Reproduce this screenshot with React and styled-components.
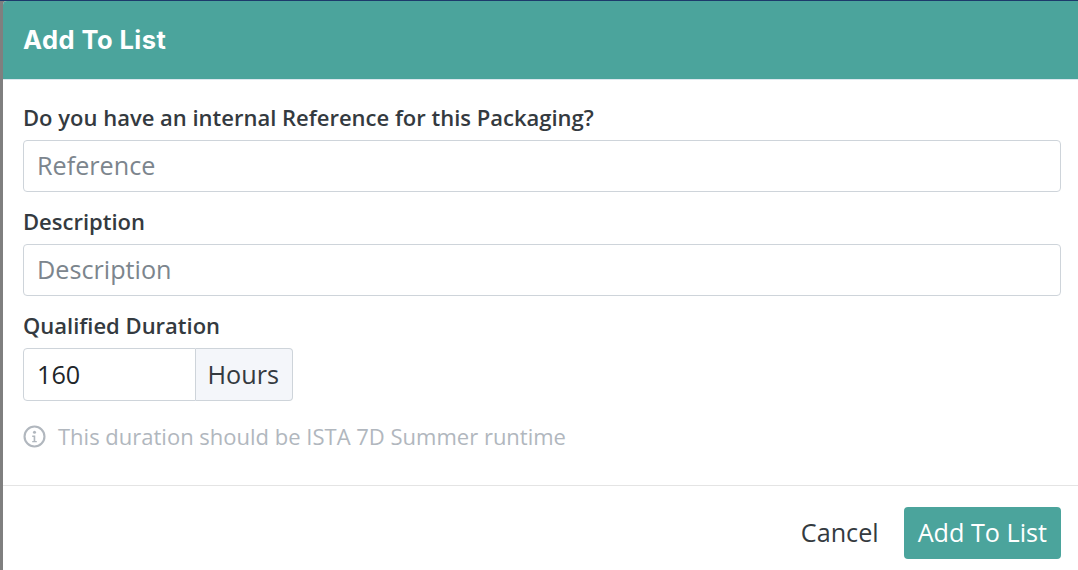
import React from 'react';
import styled, { createGlobalStyle } from 'styled-components';

const GlobalStyle = createGlobalStyle`
  html, body {
    margin: 0;
    padding: 0;
    height: 570px;
    overflow: hidden;
    background: #808080;
    font-family: "Open Sans", "Liberation Sans", sans-serif;
  }
`;

const Backdrop = styled.div`
  height: 570px;
  padding-left: 3px;
  box-sizing: border-box;
  background: #7f7f7f;
  border-top: 1px solid #1d3a6b;
  overflow: hidden;
`;

const Modal = styled.form`
  background: #fff;
  height: 569px;
  border-radius: 4px 0 0 0;
  overflow: hidden;
  display: flex;
  flex-direction: column;
`;

const Header = styled.div`
  height: 79px;
  box-sizing: border-box;
  background: #4ba49c;
  border-bottom: 1px solid #dce7ee;
  display: flex;
  align-items: center;
  padding: 0 20px 2px;
  flex: none;
`;

const Title = styled.h2`
  margin: 0;
  font-family: Inter, "Open Sans", sans-serif;
  font-size: 25.5px;
  letter-spacing: 0.45px;
  font-weight: 700;
  color: #fff;
`;

const Body = styled.div`
  padding: 23px 17px 0 20px;
  height: 406px;
  box-sizing: border-box;
  border-bottom: 1px solid #e4e4e4;
  flex: none;
`;

const Label = styled.label`
  display: block;
  font-size: 22px;
  line-height: 28px;
  font-weight: 600;
  color: #343a40;
  margin-bottom: 9px;
`;

const TextInput = styled.input`
  display: block;
  width: 100%;
  height: 52px;
  box-sizing: border-box;
  padding: 0 13px 3px;
  border: 1px solid #ced4da;
  border-radius: 4px;
  font: 400 25.2px "Open Sans", sans-serif;
  color: #212529;
  margin-bottom: 15px;

  &::placeholder {
    color: #7c858d;
    opacity: 1;
  }
`;

const InputGroup = styled.div`
  display: flex;
  width: 270px;
  height: 53px;
`;

const GroupInput = styled(TextInput)`
  flex: 1;
  width: auto;
  min-width: 0;
  height: 100%;
  margin: 0;
  padding-bottom: 1px;
  border-radius: 4px 0 0 4px;
`;

const Addon = styled.span`
  display: flex;
  align-items: center;
  padding: 0 13px 1px 12px;
  background: #f4f6fa;
  border: 1px solid #ced4da;
  border-left: none;
  border-radius: 0 4px 4px 0;
  font-size: 25.2px;
  color: #343a40;
`;

const Hint = styled.div`
  display: flex;
  align-items: center;
  gap: 12px;
  margin-top: 21px;
  font-size: 22px;
  line-height: 28px;
  color: #b1b7be;
`;

const HintIcon = styled.svg`
  width: 23px;
  height: 23px;
  flex: none;
`;

const Footer = styled.div`
  flex: 1;
  display: flex;
  justify-content: flex-end;
  align-items: flex-start;
  gap: 25px;
  padding: 21px 17px 0 0;
`;

const CancelButton = styled.button`
  border: none;
  background: none;
  padding: 0 0 3px;
  height: 52px;
  font: 400 25.2px "Open Sans", sans-serif;
  color: #343a40;
`;

const SubmitButton = styled.button`
  border: none;
  height: 52px;
  padding: 0 14px 3px;
  background: #4ba49c;
  border-radius: 4px;
  font: 400 25.2px "Open Sans", sans-serif;
  color: #fff;
`;

export default function App() {
  return (
    <>
      <GlobalStyle />
      <Backdrop>
        <Modal>
          <Header>
            <Title>Add To List</Title>
          </Header>
          <Body>
            <Label>Do you have an internal Reference for this Packaging?</Label>
            <TextInput placeholder="Reference" />
            <Label>Description</Label>
            <TextInput placeholder="Description" />
            <Label>Qualified Duration</Label>
            <InputGroup>
              <GroupInput defaultValue="160" />
              <Addon>Hours</Addon>
            </InputGroup>
            <Hint>
              <HintIcon viewBox="0 0 24 24" fill="none">
                <circle cx="12" cy="12" r="10.4" stroke="currentColor" strokeWidth="2.2" />
                <circle cx="12" cy="7.6" r="1.6" fill="currentColor" />
                <path d="M9.6 11h3.2v5.6h1.6v1.5H9.6v-1.5h1.5v-4.1H9.6z" fill="currentColor" />
              </HintIcon>
              This duration should be ISTA 7D Summer runtime
            </Hint>
          </Body>
          <Footer>
            <CancelButton type="button">Cancel</CancelButton>
            <SubmitButton type="button">Add To List</SubmitButton>
          </Footer>
        </Modal>
      </Backdrop>
    </>
  );
}
